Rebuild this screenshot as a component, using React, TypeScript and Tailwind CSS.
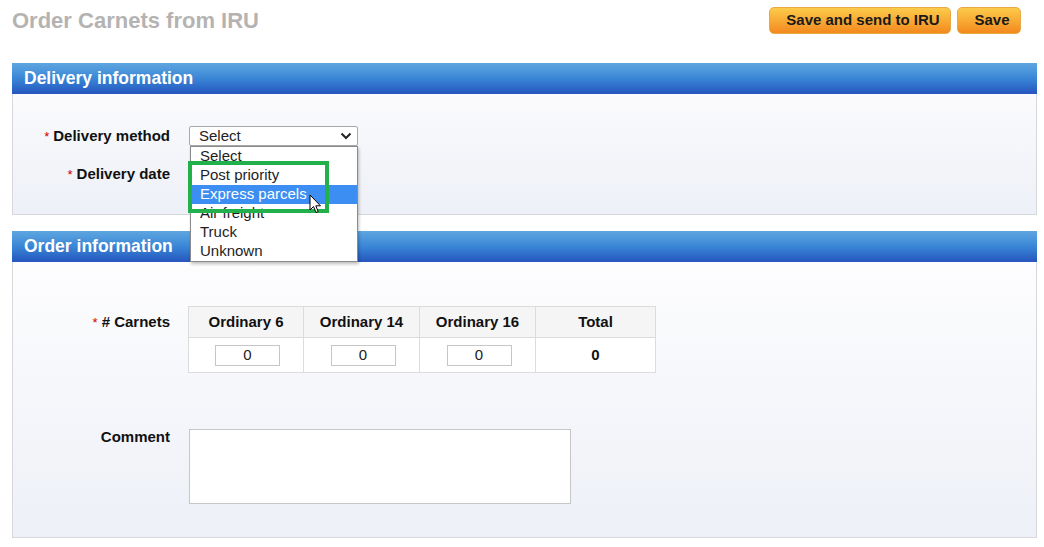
import React from 'react';

const FONT = "font-['Liberation_Sans',Arial,sans-serif]";

const options = ['Select', 'Post priority', 'Express parcels', 'Air freight', 'Truck', 'Unknown'];

// Label with red required marker, right aligned in the label column
const FieldLabel: React.FC<{ text: string; required?: boolean }> = ({ text, required }) => (
    <div className="w-[157px] shrink-0 text-right text-[15px] font-bold text-[#111]">
        {required && <span className="text-[#c00] font-normal text-[13px] mr-[4px]">*</span>}
        {text}
    </div>
);

const PanelHeader: React.FC<{ title: string }> = ({ title }) => (
    <div className="h-[31px] flex items-center pl-[12px] bg-gradient-to-b from-[#5ea6e0] via-[#3a86d6] to-[#2655be] text-white text-[17.5px] font-bold">
        {title}
    </div>
);

const Cursor = () => (
    <svg width="13" height="20" viewBox="0 0 13 20" className="absolute left-[309px] top-[194px]">
        <path d="M1 1 L1 16 L4.5 12.5 L7 18.5 L9.2 17.6 L6.8 11.8 L11.5 11.8 Z" fill="#fff" stroke="#000" strokeWidth="1" strokeLinejoin="round" />
    </svg>
);

export default function App() {
    return (
        <div className={`${FONT} relative w-[1044px] h-[547px] bg-white overflow-hidden`}>
            {/* Top bar */}
            <div className="flex items-center justify-between pl-[12px] pr-[23px] pt-[7px]">
                <h1 className="text-[22px] font-bold text-[#b5b3b2] leading-[27px]">Order Carnets from IRU</h1>
                <div className="flex gap-[6px]">
                    <button className="h-[27px] w-[182px] pl-[6px] rounded-[5px] border border-[#e8a844] bg-gradient-to-b from-[#fccb4a] to-[#f2891d] text-[15px] font-bold text-[#1a1a1a]">
                        Save and send to IRU
                    </button>
                    <button className="h-[27px] w-[64px] pl-[6px] rounded-[5px] border border-[#e8a844] bg-gradient-to-b from-[#fccb4a] to-[#f2891d] text-[15px] font-bold text-[#1a1a1a]">
                        Save
                    </button>
                </div>
            </div>

            {/* Delivery information */}
            <div className="ml-[12px] mt-[29px] w-[1025px]">
                <PanelHeader title="Delivery information" />
                <div className="h-[121px] border border-t-0 border-[#d6d8dc] bg-gradient-to-b from-[#fbfbfd] to-[#edf0f7] pt-[32px]">
                    <div className="flex items-center gap-[19px] h-[20px]">
                        <FieldLabel text="Delivery method" required />
                        <div className="relative w-[169px] h-[20px] border border-[#a9a9a9] rounded-[2px] bg-white text-[15px] text-[#222] pl-[9px] leading-[18px]">
                            Select
                            <svg width="12" height="8" viewBox="0 0 12 8" className="absolute right-[5px] top-[5px]">
                                <path d="M1.5 1.5 L6 6 L10.5 1.5" fill="none" stroke="#222" strokeWidth="2" />
                            </svg>
                        </div>
                    </div>
                    <div className="flex items-center gap-[19px] h-[20px] mt-[18px]">
                        <FieldLabel text="Delivery date" required />
                    </div>
                </div>
            </div>

            {/* Order information */}
            <div className="ml-[12px] mt-[16px] w-[1025px]">
                <PanelHeader title="Order information" />
                <div className="h-[276px] border border-t-0 border-[#d6d8dc] bg-gradient-to-b from-[#fdfdfe] to-[#edf0f7] pt-[44px]">
                    <div className="flex items-start gap-[18px]">
                        <div className="pt-[5px]">
                            <FieldLabel text="# Carnets" required />
                        </div>
                        <table className="border-collapse text-[15px] text-[#111]">
                            <thead>
                                <tr className="h-[31px] bg-[#f5f5f5]">
                                    <th className="w-[115px] border border-[#dcdcdc] font-bold">Ordinary 6</th>
                                    <th className="w-[116px] border border-[#dcdcdc] font-bold">Ordinary 14</th>
                                    <th className="w-[116px] border border-[#dcdcdc] font-bold">Ordinary 16</th>
                                    <th className="w-[120px] border border-[#dcdcdc] font-bold">Total</th>
                                </tr>
                            </thead>
                            <tbody>
                                <tr className="h-[35px] bg-white">
                                    {[0, 1, 2].map((i) => (
                                        <td key={i} className="border border-[#dcdcdc] text-center">
                                            <input
                                                readOnly
                                                value="0"
                                                className="ml-[3px] w-[65px] h-[21px] border border-[#c6c6c6] text-center text-[15px] text-[#222] outline-none"
                                            />
                                        </td>
                                    ))}
                                    <td className="border border-[#dcdcdc] text-center font-bold">0</td>
                                </tr>
                            </tbody>
                        </table>
                    </div>
                    <div className="flex items-start gap-[19px] mt-[56px]">
                        <div className="-mt-[3px]">
                            <FieldLabel text="Comment" />
                        </div>
                        <textarea className="w-[382px] h-[75px] border border-[#c6c6c6] bg-white resize-none outline-none" />
                    </div>
                </div>
            </div>

            {/* Open dropdown list */}
            <div className="absolute left-[190px] top-[146px] w-[168px] border border-[#8a8a8a] bg-white shadow-[1px_2px_3px_rgba(0,0,0,0.25)] text-[15px] text-[#1e1e1e]">
                {options.map((o) => (
                    <div
                        key={o}
                        className={`h-[19px] leading-[17px] pl-[9px] ${o === 'Express parcels' ? 'bg-[#3d8ef2] text-white' : ''}`}
                    >
                        {o}
                    </div>
                ))}
            </div>

            {/* Highlight box */}
            <div className="absolute left-[188px] top-[161px] w-[141px] h-[52px] border-[4px] border-[#22b04a]" />

            <Cursor />
        </div>
    );
}
